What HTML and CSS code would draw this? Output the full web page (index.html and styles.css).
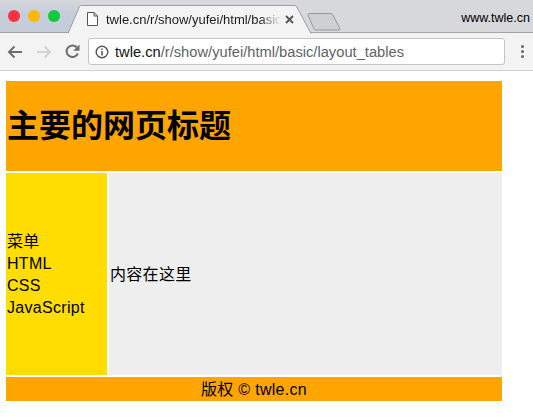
FILE: index.html
```html
<!DOCTYPE html>
<html>
<head>
  <meta charset="UTF-8">
  <title>twle.cn</title>
  <link rel="stylesheet" href="styles.css">
</head>
<body>
  <div class="tabstrip">
    <div class="lights">
      <span class="light red"></span>
      <span class="light amber"></span>
      <span class="light green"></span>
    </div>
    <div class="tab">
      <svg class="tab-shape" width="246" height="29" viewBox="0 0 246 29">
        <path d="M0 28.500 L11.500 1.500 Q12 .5 13.500 .5 L226 .5 Q228 .5 228.500 1.500 L243 28.500" fill="#f3f3f3" stroke="#9b9da3"/>
      </svg>
      <svg class="page-icon" width="11" height="14" viewBox="0 0 11 14">
        <path d="M.5.5 H7 L10.500 4 V13.500 H.5 Z M7 .5 V4 H10.500" fill="#fff" stroke="#555"/>
      </svg>
      <span class="tab-title">twle.cn/r/show/yufei/html/basic</span>
      <svg class="tab-close" width="9" height="9" viewBox="0 0 9 9">
        <path d="M1 1 L8 8 M8 1 L1 8" stroke="#555" stroke-width="1.800"/>
      </svg>
    </div>
    <svg class="new-tab" width="34" height="18" viewBox="0 0 34 18">
      <path d="M1 1.500 Q1 .5 2 .5 L24 .5 Q25 .5 25.500 1.500 L33 15.500 Q33.500 17 32 17 L9 17 Q7.500 17 7 16 L1 2 Z" fill="#cfd0d2" stroke="#96989c"/>
    </svg>
    <span class="profile">www.twle.cn</span>
  </div>

  <div class="toolbar">
    <svg class="nav-icon" width="16" height="14" viewBox="0 0 16 14">
      <path d="M15 7 H2 M7.500 1.500 L2 7 L7.500 12.500" fill="none" stroke="#6e6e6e" stroke-width="2"/>
    </svg>
    <svg class="nav-icon" width="16" height="14" viewBox="0 0 16 14">
      <path d="M1 7 H14 M8.500 1.500 L14 7 L8.500 12.500" fill="none" stroke="#d2d2d2" stroke-width="2"/>
    </svg>
    <svg class="nav-icon" width="15" height="15" viewBox="0 0 15 15">
      <path d="M12.800 9.500 A5.800 5.800 0 1 1 11.700 3.300" fill="none" stroke="#6e6e6e" stroke-width="2"/>
      <path d="M14.500 .5 V6.800 H8.200 Z" fill="#6e6e6e"/>
    </svg>
    <div class="omnibox">
      <svg class="info-icon" width="14" height="14" viewBox="0 0 14 14">
        <circle cx="7" cy="7" r="5.800" fill="none" stroke="#555" stroke-width="1.400"/>
        <path d="M7 6 V10.500 M7 3.500 V5" stroke="#555" stroke-width="1.500"/>
      </svg>
      <span class="host">twle.cn</span><span class="path">/r/show/yufei/html/basic/layout_tables</span>
    </div>
    <div class="menu-dots"><span></span><span></span><span></span></div>
  </div>

  <div class="page">
    <div class="layout">
      <div class="cell header"><h1>主要的网页标题</h1></div>
      <div class="cell menu">菜单<br>HTML<br>CSS<br>JavaScript</div>
      <div class="cell content">内容在这里</div>
      <div class="cell footer">版权 © twle.cn</div>
    </div>
  </div>
</body>
</html>
```

FILE: styles.css
```css
html, body {
  margin: 0;
  height: 418px;
  overflow: hidden;
}
body {
  font-family: "Liberation Sans", "Noto Sans CJK SC", sans-serif;
  background: #ffffff;
  color: #000000;
}

/* browser chrome */
.tabstrip {
  display: flex;
  align-items: flex-start;
  height: 33px;
  background:
    linear-gradient(to bottom, #d6d8dc 0, #c5ccda 14px) 0 0 / 80px 100% no-repeat,
    #d6d8dc;
}
.lights {
  display: flex;
  gap: 8px;
  padding: 10px 0 0 8px;
}
.light {
  width: 12px;
  height: 12px;
  border-radius: 50%;
}
.red { background: #fb3340; }
.amber { background: #fdb900; }
.green { background: #10c93c; }
.tab {
  position: relative;
  display: flex;
  align-items: center;
  width: 246px;
  height: 28px;
  margin: 5px 0 0 8px;
  font-size: 13px;
}
.tab-shape {
  position: absolute;
  left: 0;
  top: 0;
}
.page-icon {
  position: relative;
  margin-left: 19px;
  flex: none;
}
.tab-title {
  position: relative;
  width: 175px;
  margin-left: 8px;
  overflow: hidden;
  white-space: nowrap;
  color: #1c1c1c;
  -webkit-mask-image: linear-gradient(to right, #000 88%, transparent);
  mask-image: linear-gradient(to right, #000 88%, transparent);
}
.tab-close {
  position: relative;
  margin-left: 4px;
  flex: none;
}
.new-tab {
  margin: 13px 0 0 -7px;
  flex: none;
}
.profile {
  margin: 11px 0 0 auto;
  padding-right: 3px;
  font-size: 12.500px;
  line-height: 14px;
}
.toolbar {
  display: flex;
  align-items: center;
  box-sizing: border-box;
  height: 39px;
  margin-top: -1px;
  padding-left: 7px;
  background: #f3f3f3;
  border-top: 1px solid #a0a2a8;
  border-bottom: 1px solid #d0d0d0;
}
.nav-icon {
  flex: none;
  margin-right: 13px;
}
.omnibox {
  display: flex;
  align-items: center;
  box-sizing: border-box;
  width: 417px;
  height: 27px;
  margin-left: -5px;
  background: #ffffff;
  border: 1px solid #c4c4c4;
  border-radius: 3px;
  font-size: 14.700px;
}
.info-icon {
  margin: 0 6px 0 6px;
  flex: none;
}
.host { color: #111111; }
.path { color: #5f6368; }
.menu-dots {
  display: flex;
  flex-direction: column;
  gap: 2px;
  margin-left: 16px;
}
.menu-dots span {
  width: 3px;
  height: 3px;
  border-radius: 50%;
  background: #666666;
}

/* page */
.page {
  padding: 10px 0 0 6px;
}
.layout {
  display: grid;
  grid-template-columns: 101px 393px;
  grid-template-rows: 90px 202px 24px;
  gap: 2px;
  width: 496px;
  font-size: 16px;
  line-height: 22px;
  letter-spacing: 0.3px;
}
.cell {
  display: flex;
  align-items: center;
  box-sizing: border-box;
  padding: 0 1px;
}
.header {
  grid-column: 1 / 3;
  background: #ffa500;
}
.header h1 {
  margin: 0;
  font-size: 32px;
  font-weight: bold;
  line-height: 40px;
  letter-spacing: 0;
}
.menu {
  display: block;
  padding-top: 58px;
  background: #ffdd00;
}
.content {
  padding-top: 2px;
  background: #eeeeee;
}
.footer {
  grid-column: 1 / 3;
  justify-content: center;
  padding-top: 2px;
  background: #ffa500;
}
```
